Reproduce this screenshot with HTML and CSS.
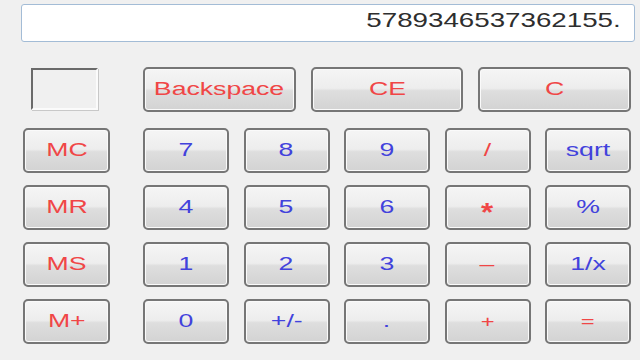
FILE: index.html
```html
<!DOCTYPE html>
<html lang="en">
<head>
<meta charset="UTF-8">
<title>Calculator</title>
<link rel="stylesheet" href="styles.css">
</head>
<body>
<div class="calc">
<div class="display"><span>5789346537362155.</span></div>

<div class="top-row">
<div class="mem-cell"><div class="mem"></div></div>
<div class="wide-keys">
<button class="key red"><span>Backspace</span></button>
<button class="key red"><span>CE</span></button>
<button class="key red"><span>C</span></button>
</div>
</div>

<div class="rows">
<div class="side">
<button class="key red"><span>MC</span></button>
<button class="key red"><span>MR</span></button>
<button class="key red"><span>MS</span></button>
<button class="key red"><span>M+</span></button>
</div>
<div class="grid">
<button class="key blue"><span>7</span></button>
<button class="key blue"><span>8</span></button>
<button class="key blue"><span>9</span></button>
<button class="key red"><span>/</span></button>
<button class="key blue"><span>sqrt</span></button>

<button class="key blue"><span>4</span></button>
<button class="key blue"><span>5</span></button>
<button class="key blue"><span>6</span></button>
<button class="key red star"><span>*</span></button>
<button class="key blue"><span>%</span></button>

<button class="key blue"><span>1</span></button>
<button class="key blue"><span>2</span></button>
<button class="key blue"><span>3</span></button>
<button class="key red"><span>&ndash;</span></button>
<button class="key blue"><span>1/x</span></button>

<button class="key blue"><span>0</span></button>
<button class="key blue"><span>+/-</span></button>
<button class="key blue"><span>.</span></button>
<button class="key red small"><span>+</span></button>
<button class="key red small"><span>=</span></button>
</div>
</div>
</div>
</body>
</html>
```

FILE: styles.css
```css
body {
margin: 0;
background: #f0f0f0;
font-family: "Liberation Sans", Arial, sans-serif;
}
.calc {
padding: 4px 0 0 21px;
}
.display {
box-sizing: border-box;
width: 614px;
height: 38px;
border: 1px solid #a3bcd6;
border-radius: 3px;
background: #fff;
display: flex;
justify-content: flex-end;
align-items: center;
padding: 0 13px 6px 0;
font-size: 21px;
color: #2e2e2e;
}
.display span {
display: inline-block;
transform: scaleX(1.32);
transform-origin: right center;
}
.top-row {
display: flex;
gap: 33px;
margin: 25px 0 0 2px;
height: 45px;
}
.mem-cell {
width: 87px;
padding: 1px 0 0 8px;
box-sizing: border-box;
}
.mem {
box-sizing: border-box;
width: 67px;
height: 42px;
border: 2px solid;
border-color: #6a6a6a #fbfbfb #fbfbfb #6a6a6a;
box-shadow: 1px 1px 0 #c8c8c8;
background: #f0f0f0;
}
.wide-keys {
display: flex;
gap: 15px;
width: 488px;
}
.wide-keys .key {
flex: 1;
}
.rows {
display: flex;
gap: 33px;
margin: 16px 0 0 2px;
}
.side {
width: 87px;
display: flex;
flex-direction: column;
gap: 12px;
}
.grid {
display: grid;
grid-template-columns: repeat(5, 86px);
column-gap: 14.5px;
row-gap: 12px;
}
.key {
box-sizing: border-box;
height: 45px;
padding: 0;
border: 2px solid #767676;
border-radius: 5px;
background: linear-gradient(#f5f5f5 0%, #ededed 47%, #dedede 53%, #d3d3d3 100%);
box-shadow: inset 0 0 0 1px #fafafa;
font-family: "Liberation Sans", Arial, sans-serif;
font-size: 18px;
display: flex;
align-items: center;
justify-content: center;
}
.key span {
display: inline-block;
transform: scaleX(1.48);
}
.red {
color: #f04646;
}
.blue {
color: #4242dc;
}
.star span {
font-size: 26px;
font-weight: bold;
transform: translateY(5px) scaleX(1.2);
}
.small span {
font-size: 16px;
}
```
